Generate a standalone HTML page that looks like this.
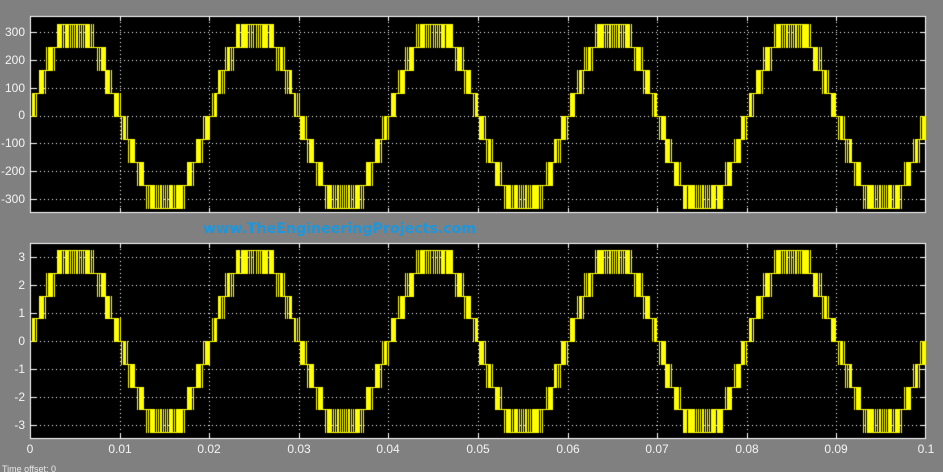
<!DOCTYPE html>
<html><head><meta charset="utf-8">
<style>
html,body{margin:0;padding:0;background:#808080;width:943px;height:472px;overflow:hidden;position:relative;font-family:"Liberation Sans",sans-serif}
canvas{position:absolute;left:0;top:0}
.yl{position:absolute;right:918px;color:#f4f4f4;font-size:12px;line-height:12px;text-align:right;white-space:nowrap}
.xl{position:absolute;top:443px;color:#f4f4f4;font-size:12px;line-height:12px;width:40px;margin-left:-20px;text-align:center}
.wm{position:absolute;left:203px;top:220px;color:#1e96dc;font-weight:bold;font-family:"DejaVu Sans",sans-serif;font-size:14.2px;line-height:18px}
.to{position:absolute;left:2px;top:464px;color:#e8e8e8;font-size:9px}
</style></head><body>
<canvas id="c" width="943" height="472"></canvas>
<div class="yl" style="top:26px">300</div>
<div class="yl" style="top:54px">200</div>
<div class="yl" style="top:82px">100</div>
<div class="yl" style="top:109px">0</div>
<div class="yl" style="top:137px">-100</div>
<div class="yl" style="top:165px">-200</div>
<div class="yl" style="top:193px">-300</div>
<div class="yl" style="top:251px">3</div>
<div class="yl" style="top:279px">2</div>
<div class="yl" style="top:307px">1</div>
<div class="yl" style="top:335px">0</div>
<div class="yl" style="top:363px">-1</div>
<div class="yl" style="top:391px">-2</div>
<div class="yl" style="top:419px">-3</div>
<div class="xl" style="left:30px">0</div>
<div class="xl" style="left:120px">0.01</div>
<div class="xl" style="left:209px">0.02</div>
<div class="xl" style="left:299px">0.03</div>
<div class="xl" style="left:388px">0.04</div>
<div class="xl" style="left:478px">0.05</div>
<div class="xl" style="left:568px">0.06</div>
<div class="xl" style="left:657px">0.07</div>
<div class="xl" style="left:747px">0.08</div>
<div class="xl" style="left:836px">0.09</div>
<div class="xl" style="left:926px">0.1</div>
<div class="wm">www.TheEngineeringProjects.com</div>
<div class="to">Time offset: 0</div>
<script>
var c=document.getElementById('c'),g=c.getContext('2d');
var X0=30,X1=926;
function out(t){var A=3.95,fc=4000;
 var r=A*Math.sin(2*Math.PI*50*t);
 var ph=(t*fc)%1;var tri=ph<0.5?ph*2:2-ph*2;
 var fl=Math.floor(r);return fl+((r-fl)>tri?1:0);}
function panel(top,bot,zero,step,ticks){
 g.fillStyle='#000';g.fillRect(X0,top,X1-X0,bot-top);
 g.fillStyle='#fff';
 g.fillRect(X0,top,X1-X0,1);g.fillRect(X0,bot-1,X1-X0,1);g.fillRect(X0,top,1,bot-top);g.fillRect(X1-1,top,1,bot-top);
 for(var i=1;i<10;i++){var x=Math.round(X0+i*(X1-X0)/10);
  for(var y=top+2;y<bot;y+=4)g.fillRect(x,y,1,1);
  g.fillRect(x,top,1,5);g.fillRect(x,bot-5,1,5);}
 ticks.forEach(function(y){y=Math.round(y);
  for(var x=X0+2;x<X1;x+=4)g.fillRect(x,y,1,1);
  g.fillRect(X0,y,6,1);g.fillRect(X1-6,y,6,1);});
 g.fillStyle='#ffff00';
 var W=X1-X0,prev=0;
 for(var px=0;px<W-1;px++){
  var mn=prev,mx=prev,o;
  for(var s=0;s<40;s++){var t=(px+s/40)/W*0.1;o=out(t);if(o<mn)mn=o;if(o>mx)mx=o;}
  var y1=Math.round(zero-mx*step),y2=Math.round(zero-mn*step);
  var yy1=Math.max(y1,top+1),yy2=Math.min(y2,bot-2);
  g.fillRect(X0+1+px,yy1,1,yy2-yy1+1);
  prev=o;
 }
}
panel(16,213,115.5,23,[32,60,87.5,115.5,143,171,199]);
panel(243,439,341,22.75,[257,285,313,341,369,397,425]);
</script>
</body></html>
